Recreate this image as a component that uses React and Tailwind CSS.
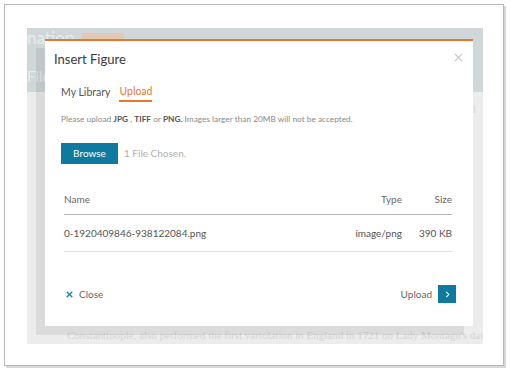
import React from "react";

const font = { fontFamily: "Lato, 'Open Sans', sans-serif" };

export default function App() {
  return (
    <div className="h-[370px] w-[511px] bg-white p-[4px]" style={font}>
      <div className="h-[362px] w-[500px] border border-[#b9b9b9] bg-white pl-[22px] pt-[23px] shadow-[2px_2px_0_#d6d6d6]">
        <div className="relative h-[316px] w-[456px] overflow-hidden bg-[#ececec]">
          {/* page behind the dialog */}
          <div className="flex h-[64px] flex-col bg-[#cfd7d9]">
            <div className="flex items-center gap-[8px]">
              <span className="text-[17px] leading-[20px] text-[#e6eced]">nation</span>
              <span className="h-[10px] w-[42px] bg-[#e3c9b4]"></span>
            </div>
            <span className="mt-[19px] text-[15px] leading-[18px] text-[#e6eced]">File</span>
          </div>
          <div
            className="flex flex-col gap-[6px] pl-[40px] pt-[10px] text-[11px] leading-[14px] text-[#d6d6d6]"
            style={{ fontFamily: "'Liberation Serif', serif" }}
          >
            <span className="ml-[395px] whitespace-nowrap">dol</span>
            <span className="ml-[395px] whitespace-nowrap">es</span>
            <span className="h-[180px]"></span>
            <span className="whitespace-nowrap">Constantinople, also performed the first variolation in England in 1721 on Lady Montagu's daughter. In ge</span>
          </div>

          {/* dialog */}
          <div className="absolute left-[18px] top-[11px] flex h-[287px] w-[428px] flex-col border-t-2 border-[#e8782f] bg-white shadow-[-9px_9px_0_rgba(0,0,0,0.07)]">
            <div className="flex items-center justify-between pl-[9px] pr-[10px] pt-[9px]">
              <span className="text-[13px] leading-[18px] text-[#3a3a3a]">Insert Figure</span>
              <svg width="9" height="9" viewBox="0 0 10 10" className="mt-[-4px]">
                <path d="M1 1L9 9M9 1L1 9" stroke="#c4c4c4" strokeWidth="1.2" />
              </svg>
            </div>

            <div className="mt-[16px] flex items-end gap-[9px] pl-[16px] text-[10.5px] leading-[14px]">
              <span className="pb-[3px] text-[#555]">My Library</span>
              <span className="border-b-2 border-[#e8782f] pb-[2px] text-[#e8782f]">Upload</span>
            </div>

            <p className="mt-[12px] whitespace-nowrap pl-[16px] text-[8.3px] leading-[10px] text-[#8a8a8a]">
              Please upload <b className="text-[#555]">JPG</b> , <b className="text-[#555]">TIFF</b> or{" "}
              <b className="text-[#555]">PNG.</b> Images larger than 20MB will not be accepted.
            </p>

            <div className="mt-[19px] flex items-center gap-[6px] pl-[16px]">
              <span className="flex h-[21px] w-[57px] items-center justify-center bg-[#0f7aa0] text-[10px] text-white">
                Browse
              </span>
              <span className="text-[10px] text-[#b0b0b0]">1 File Chosen.</span>
            </div>

            <div className="ml-[19px] mr-[21px] mt-[22px] flex flex-col text-[10px] text-[#555]">
              <div className="flex h-[29px] items-center border-b border-[#b5b5b5] pb-[2px]">
                <span className="flex-1 text-[#6a6a6a]">Name</span>
                <span className="w-[60px] text-right text-[#6a6a6a]">Type</span>
                <span className="w-[50px] text-right text-[#6a6a6a]">Size</span>
              </div>
              <div className="flex h-[37px] items-center border-b border-[#e0e0e0]">
                <span className="flex-1">0-1920409846-938122084.png</span>
                <span className="w-[60px] text-right">image/png</span>
                <span className="w-[50px] text-right">390 KB</span>
              </div>
            </div>

            <div className="mt-auto mb-[23px] flex items-center justify-between pl-[21px] pr-[17px] text-[10px]">
              <span className="flex items-center gap-[6px] text-[#666]">
                <svg width="7" height="7" viewBox="0 0 10 10">
                  <path d="M1 1L9 9M9 1L1 9" stroke="#1e86ad" strokeWidth="2" />
                </svg>
                Close
              </span>
              <span className="flex items-center gap-[6px] text-[#666]">
                Upload
                <span className="flex h-[18px] w-[18px] items-center justify-center bg-[#0f7aa0]">
                  <svg width="5" height="7" viewBox="0 0 5 8">
                    <path d="M1 1L4 4L1 7" stroke="white" strokeWidth="1.2" fill="none" />
                  </svg>
                </span>
              </span>
            </div>
          </div>
        </div>
      </div>
    </div>
  );
}
